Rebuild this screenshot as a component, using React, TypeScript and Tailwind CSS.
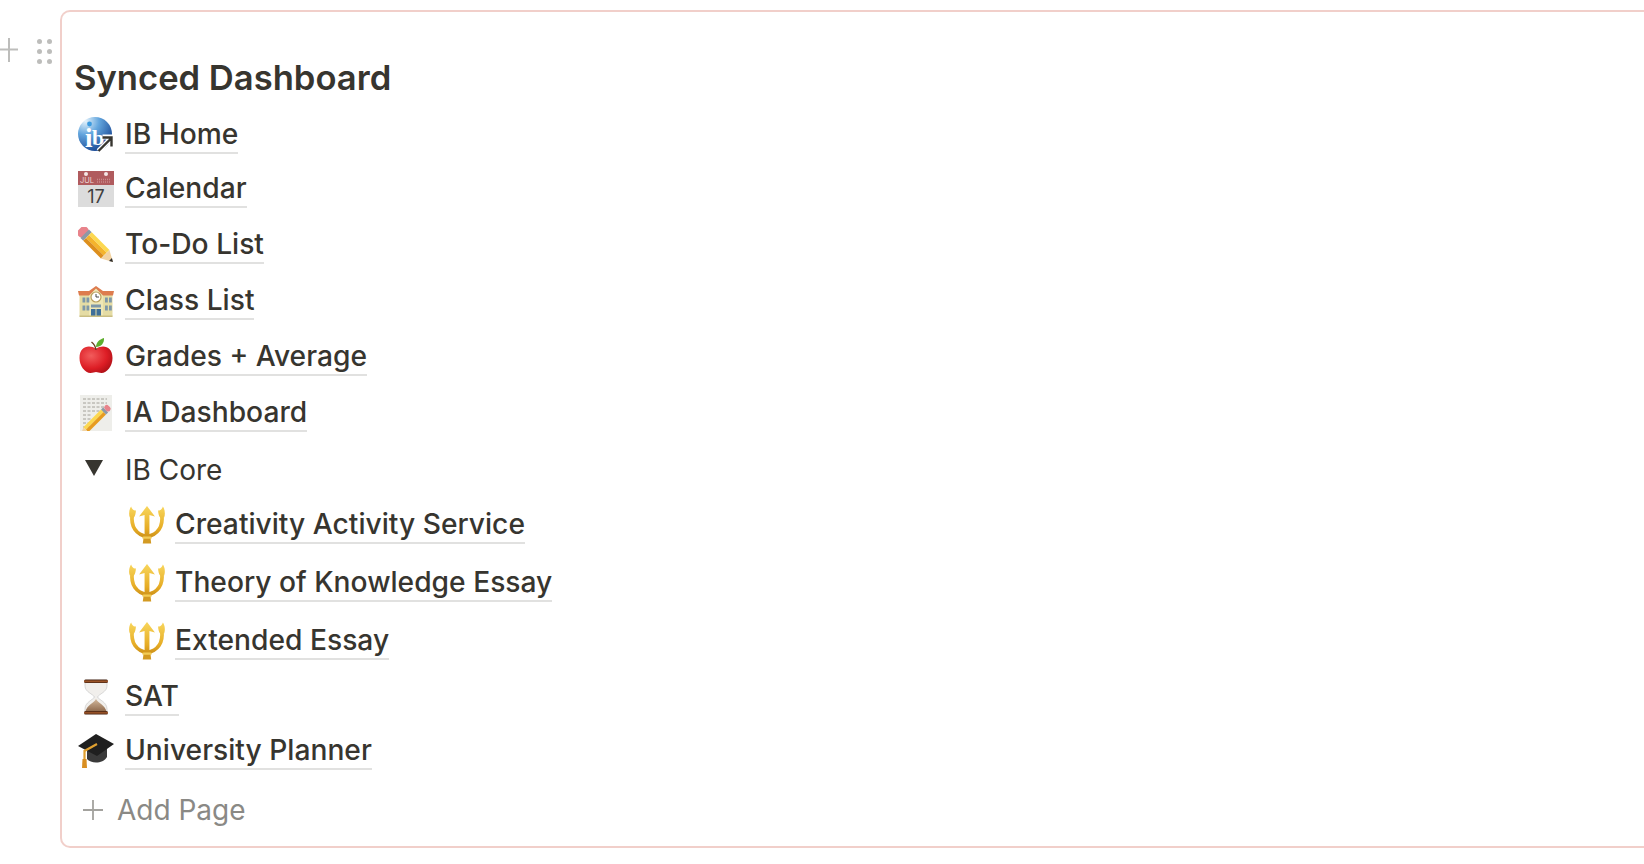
import React from "react";

const font = { fontFamily: "Inter, 'Liberation Sans', sans-serif" };

function IbIcon() {
  return (
    <svg viewBox="0 0 36 36" className="w-9 h-9">
      <defs>
        <radialGradient id="ibg" cx="0.22" cy="0.12" r="1">
          <stop offset="0" stopColor="#e6f3fb" />
          <stop offset="0.4" stopColor="#63a6de" />
          <stop offset="1" stopColor="#123f8e" />
        </radialGradient>
      </defs>
      <circle cx="17" cy="17" r="17" fill="url(#ibg)" />
      <circle cx="11.500" cy="7" r="2.400" fill="#3b9be0" />
      <text x="7" y="30" fontSize="27" fontWeight="700" fill="#fff" style={{ fontFamily: "'Liberation Serif', serif" }}>i</text>
      <text x="14" y="28" fontSize="22" fontWeight="700" fill="#fff" style={{ fontFamily: "'Liberation Serif', serif" }}>b</text>
      <path d="M20.500 34 L33 21.500 M24.500 20 H34 V29.500" fill="none" stroke="#fff" strokeWidth="5" />
      <path d="M20.500 34 L33 21.500 M24.500 20.500 H33.500 V29.500" fill="none" stroke="#37352f" strokeWidth="2.400" />
    </svg>
  );
}

function CalendarIcon() {
  return (
    <svg viewBox="0 0 36 36" className="w-9 h-9">
      <rect x="0" y="0" width="36" height="36" fill="#dcdcdc" />
      <rect x="0" y="0" width="36" height="14" fill="#b05b5e" />
      <circle cx="8" cy="3" r="2" fill="#f4e6e6" />
      <circle cx="28" cy="3" r="2" fill="#f4e6e6" />
      <text x="2" y="12" fontSize="7.500" fill="#edd5d5" style={font}>JUL</text>
      <path d="M19 11 h14 M19 8.500 h14" stroke="#c98a8c" strokeWidth="1.400" strokeDasharray="1 1" />
      <text x="18" y="32" fontSize="18" textAnchor="middle" fill="#3f3f3f" style={font}>17</text>
    </svg>
  );
}

function PencilIcon() {
  return (
    <svg viewBox="0 0 36 36" className="w-9 h-9">
      <g transform="rotate(45 18 18)">
        <rect x="-5" y="12" width="8" height="12" rx="3" fill="#e8838b" />
        <rect x="2" y="12" width="4" height="12" fill="#8d99a6" />
        <rect x="6" y="12" width="25" height="4" fill="#fcd850" />
        <rect x="6" y="16" width="25" height="4" fill="#f4b42c" />
        <rect x="6" y="20" width="25" height="4" fill="#dd8f1c" />
        <path d="M31 12 L42 18 L31 24 Z" fill="#f2d3a2" />
        <path d="M38.500 16 L42 18 L38.500 20 Z" fill="#2b2b2b" />
      </g>
    </svg>
  );
}

function SchoolIcon() {
  const windows = [4.500, 8.500, 27, 31];
  return (
    <svg viewBox="0 0 36 36" className="w-9 h-9">
      <rect x="1.500" y="12" width="33" height="21.500" fill="#e5dca4" />
      <path d="M0 8 H11 L18 3 L25 8 H36 L35 12.500 H1 Z" fill="#dd7c4e" />
      <path d="M11 12.500 L18 5.500 L25 12.500 V33.500 H11 Z" fill="#efe7b6" />
      <circle cx="18" cy="14" r="5" fill="#fff" stroke="#b99f5d" strokeWidth="1.200" />
      <path d="M18 11 V14 H21" fill="none" stroke="#333" strokeWidth="0.900" />
      {windows.map((x) => (
        <g key={x}>
          <rect x={x} y="14.500" width="2.800" height="5" fill="#7e97a8" />
          <rect x={x} y="22.500" width="2.800" height="5" fill="#7e97a8" />
        </g>
      ))}
      <rect x="13" y="21.500" width="10" height="3" fill="#7e97a8" />
      <rect x="13" y="26" width="10" height="7.500" fill="#3f6f99" />
      <path d="M18 26 V33.500" stroke="#e8dfa8" strokeWidth="1" />
      <rect x="1.500" y="32.500" width="33" height="1.500" fill="#c9bd82" />
    </svg>
  );
}

function AppleIcon() {
  return (
    <svg viewBox="0 0 36 36" className="w-9 h-9 -mt-[2px]">
      <defs>
        <radialGradient id="apl" cx="0.35" cy="0.35" r="0.8">
          <stop offset="0" stopColor="#f25c5c" />
          <stop offset="0.6" stopColor="#dd1d25" />
          <stop offset="1" stopColor="#a30d14" />
        </radialGradient>
      </defs>
      <path d="M18 10.500 C11 6.500 1.500 8 1.500 20 C1.500 28 7 35 12.500 35 C15 35 16.500 34 18 34 C19.500 34 21 35 23.500 35 C29 35 34.500 28 34.500 20 C34.500 8 25 6.500 18 10.500 Z" fill="url(#apl)" />
      <path d="M18 12 C17.500 8 16 6 13.500 4" fill="none" stroke="#6b3f1f" strokeWidth="1.400" />
      <path d="M18 9 C18 4 22 1 26 0 C26.500 5 23 9 18 9 Z" fill="#5eae2f" />
    </svg>
  );
}

function MemoIcon() {
  const lines = [4, 8, 12, 16, 20, 24, 28, 32];
  return (
    <svg viewBox="0 0 36 36" className="w-9 h-9">
      <rect x="2" y="0" width="32" height="36" fill="#eeeeea" />
      {lines.map((y, i) => (
        <path key={y} d={`M5 ${y} H${i > 3 ? 14 : 29}`} stroke="#8f8d86" strokeWidth="0.800" strokeDasharray="3 1.500" />
      ))}
      <g transform="rotate(-45 22 22)">
        <rect x="3" y="17.500" width="25" height="3.500" fill="#fcd850" />
        <rect x="3" y="21" width="25" height="3.500" fill="#e79c20" />
        <rect x="28" y="17.500" width="3" height="7" fill="#8d99a6" />
        <rect x="31" y="17.500" width="5" height="7" rx="2.500" fill="#e8838b" />
        <path d="M3 17.500 L-4 21 L3 24.500 Z" fill="#f2d3a2" />
        <path d="M-1.500 19.800 L-4 21 L-1.500 22.200 Z" fill="#222" />
      </g>
    </svg>
  );
}

function TridentIcon() {
  return (
    <svg viewBox="0 0 36 36" className="w-[38px] h-[38px] -mr-[2px]">
      <defs>
        <linearGradient id="tri" x1="0" y1="0" x2="0" y2="36" gradientUnits="userSpaceOnUse">
          <stop offset="0" stopColor="#f8d65c" />
          <stop offset="0.6" stopColor="#e6ac25" />
          <stop offset="1" stopColor="#b97c10" />
        </linearGradient>
      </defs>
      <path d="M4 8 C2.500 20 8 27 18 29 C28 27 33.500 20 32 8" fill="none" stroke="url(#tri)" strokeWidth="3.600" />
      <path d="M18 0 L25.500 10 L20.300 8.500 V29 H15.700 V8.500 L10.500 10 Z" fill="url(#tri)" />
      <path d="M3 0.500 C3.500 3 6 5 7.500 4 C7.500 7 6.500 10 5.500 11 L1.800 11 C0.500 8 1 3 3 0.500 Z" fill="url(#tri)" />
      <path d="M33 0.500 C32.500 3 30 5 28.500 4 C28.500 7 29.500 10 30.500 11 L34.200 11 C35.500 8 35 3 33 0.500 Z" fill="url(#tri)" />
      <path d="M15 28 H21 L22 35.500 H14 Z" fill="#d39a22" />
      <rect x="13.500" y="29" width="9" height="2" rx="1" fill="#f3cc55" />
    </svg>
  );
}

function HourglassIcon() {
  return (
    <svg viewBox="0 0 36 36" className="w-9 h-9">
      <defs>
        <linearGradient id="sand" x1="0" y1="0" x2="0" y2="1">
          <stop offset="0" stopColor="#d3b89b" />
          <stop offset="1" stopColor="#8f6a4d" />
        </linearGradient>
        <linearGradient id="cap" x1="0" y1="0" x2="0" y2="1">
          <stop offset="0" stopColor="#3f1f10" />
          <stop offset="0.5" stopColor="#a55a2b" />
          <stop offset="1" stopColor="#3f1f10" />
        </linearGradient>
      </defs>
      <path d="M7 3 H29 V7 C29 13 21 15 19.500 18 C21 21 29 23 29 30 V33 H7 V30 C7 23 15 21 16.500 18 C15 15 7 13 7 7 Z" fill="#f1efec" stroke="#c9c9c9" strokeWidth="0.700" />
      <path d="M18 20 C20 24 27 26 28.500 32.500 H7.500 C9 26 16 24 18 20 Z" fill="url(#sand)" />
      <rect x="6" y="0.500" width="24" height="3.600" rx="1.500" fill="url(#cap)" />
      <rect x="6" y="32" width="24" height="3.600" rx="1.500" fill="url(#cap)" />
    </svg>
  );
}

function GradCapIcon() {
  return (
    <svg viewBox="0 0 36 36" className="w-9 h-9">
      <path d="M9 15 V26 C13 31 25 31 29 24 V15 Z" fill="#3a3a3a" />
      <path d="M18 1 L36 11 L19 23 L0 13 Z" fill="#1f1f1f" />
      <path d="M19 11 L6.500 18 V28" fill="none" stroke="#e0a030" strokeWidth="2.200" />
      <path d="M4.500 26 H8.500 L9 35 H4 Z" fill="#d98f22" />
    </svg>
  );
}

function PageRow({ icon, title, className }: { icon: React.ReactNode; title: string; className: string }) {
  return (
    <div className={`flex items-center h-10 ${className}`}>
      <div className="shrink-0 mr-[11px]">{icon}</div>
      <span className="text-[28.200px] leading-[36px] font-medium text-[#37352f] border-b-2 border-[#e1e1e0] whitespace-nowrap">
        {title}
      </span>
    </div>
  );
}

export default function App() {
  return (
    <div className="h-[864px] w-full overflow-hidden bg-white flex" style={font}>
      <div className="w-[60px] shrink-0 flex items-start gap-[19px] pt-[39px] text-[#bdbdbb]">
        <svg viewBox="0 0 18 26" className="w-[18px] h-[26px] -mt-[2px] shrink-0">
          <path d="M9 1 V25 M0 12.500 H18" stroke="currentColor" strokeWidth="2" />
        </svg>
        <div className="grid grid-cols-2 gap-x-[5px] gap-y-[5px]">
          {[0, 1, 2, 3, 4, 5].map((d) => (
            <span key={d} className="w-[5px] h-[5px] rounded-full bg-[#bdbdbb]" />
          ))}
        </div>
      </div>
      <div className="mt-[10px] h-[838px] w-[1640px] shrink-0 border-2 border-r-0 border-[#f1cfca] rounded-l-[10px] pl-[16px]">
        <h1 className="text-[34.600px] leading-[44px] font-semibold text-[#37352f] mt-[43px] -ml-[4px]">Synced Dashboard</h1>
        <PageRow icon={<IbIcon />} title="IB Home" className="mt-[16px]" />
        <PageRow icon={<CalendarIcon />} title="Calendar" className="mt-[14px]" />
        <PageRow icon={<PencilIcon />} title="To-Do List" className="mt-[16px]" />
        <PageRow icon={<SchoolIcon />} title="Class List" className="mt-[16px]" />
        <PageRow icon={<AppleIcon />} title="Grades + Average" className="mt-[16px]" />
        <PageRow icon={<MemoIcon />} title="IA Dashboard" className="mt-[16px]" />
        <div className="flex items-center h-10 mt-[17px]">
          <svg viewBox="0 0 18 16" className="w-[18px] h-4 ml-[7px] mr-[22px] -mt-1 shrink-0">
            <path d="M0 0 H18 L9 16 Z" fill="#37352f" />
          </svg>
          <span className="text-[28px] leading-[36px] text-[#37352f]">IB Core</span>
        </div>
        <div className="pl-[50px]">
          <PageRow icon={<TridentIcon />} title="Creativity Activity Service" className="mt-[15px]" />
          <PageRow icon={<TridentIcon />} title="Theory of Knowledge Essay" className="mt-[18px]" />
          <PageRow icon={<TridentIcon />} title="Extended Essay" className="mt-[18px]" />
        </div>
        <PageRow icon={<HourglassIcon />} title="SAT" className="mt-[16px]" />
        <PageRow icon={<GradCapIcon />} title="University Planner" className="mt-[14px]" />
        <div className="flex items-center h-10 mt-[19px] text-[#8a8985]">
          <svg viewBox="0 0 20 20" className="w-5 h-5 ml-[5px] mr-[14px] shrink-0">
            <path d="M10 0 V20 M0 10 H20" stroke="#a3a29e" strokeWidth="1.800" />
          </svg>
          <span className="text-[28px] leading-[36px]">Add Page</span>
        </div>
      </div>
    </div>
  );
}
